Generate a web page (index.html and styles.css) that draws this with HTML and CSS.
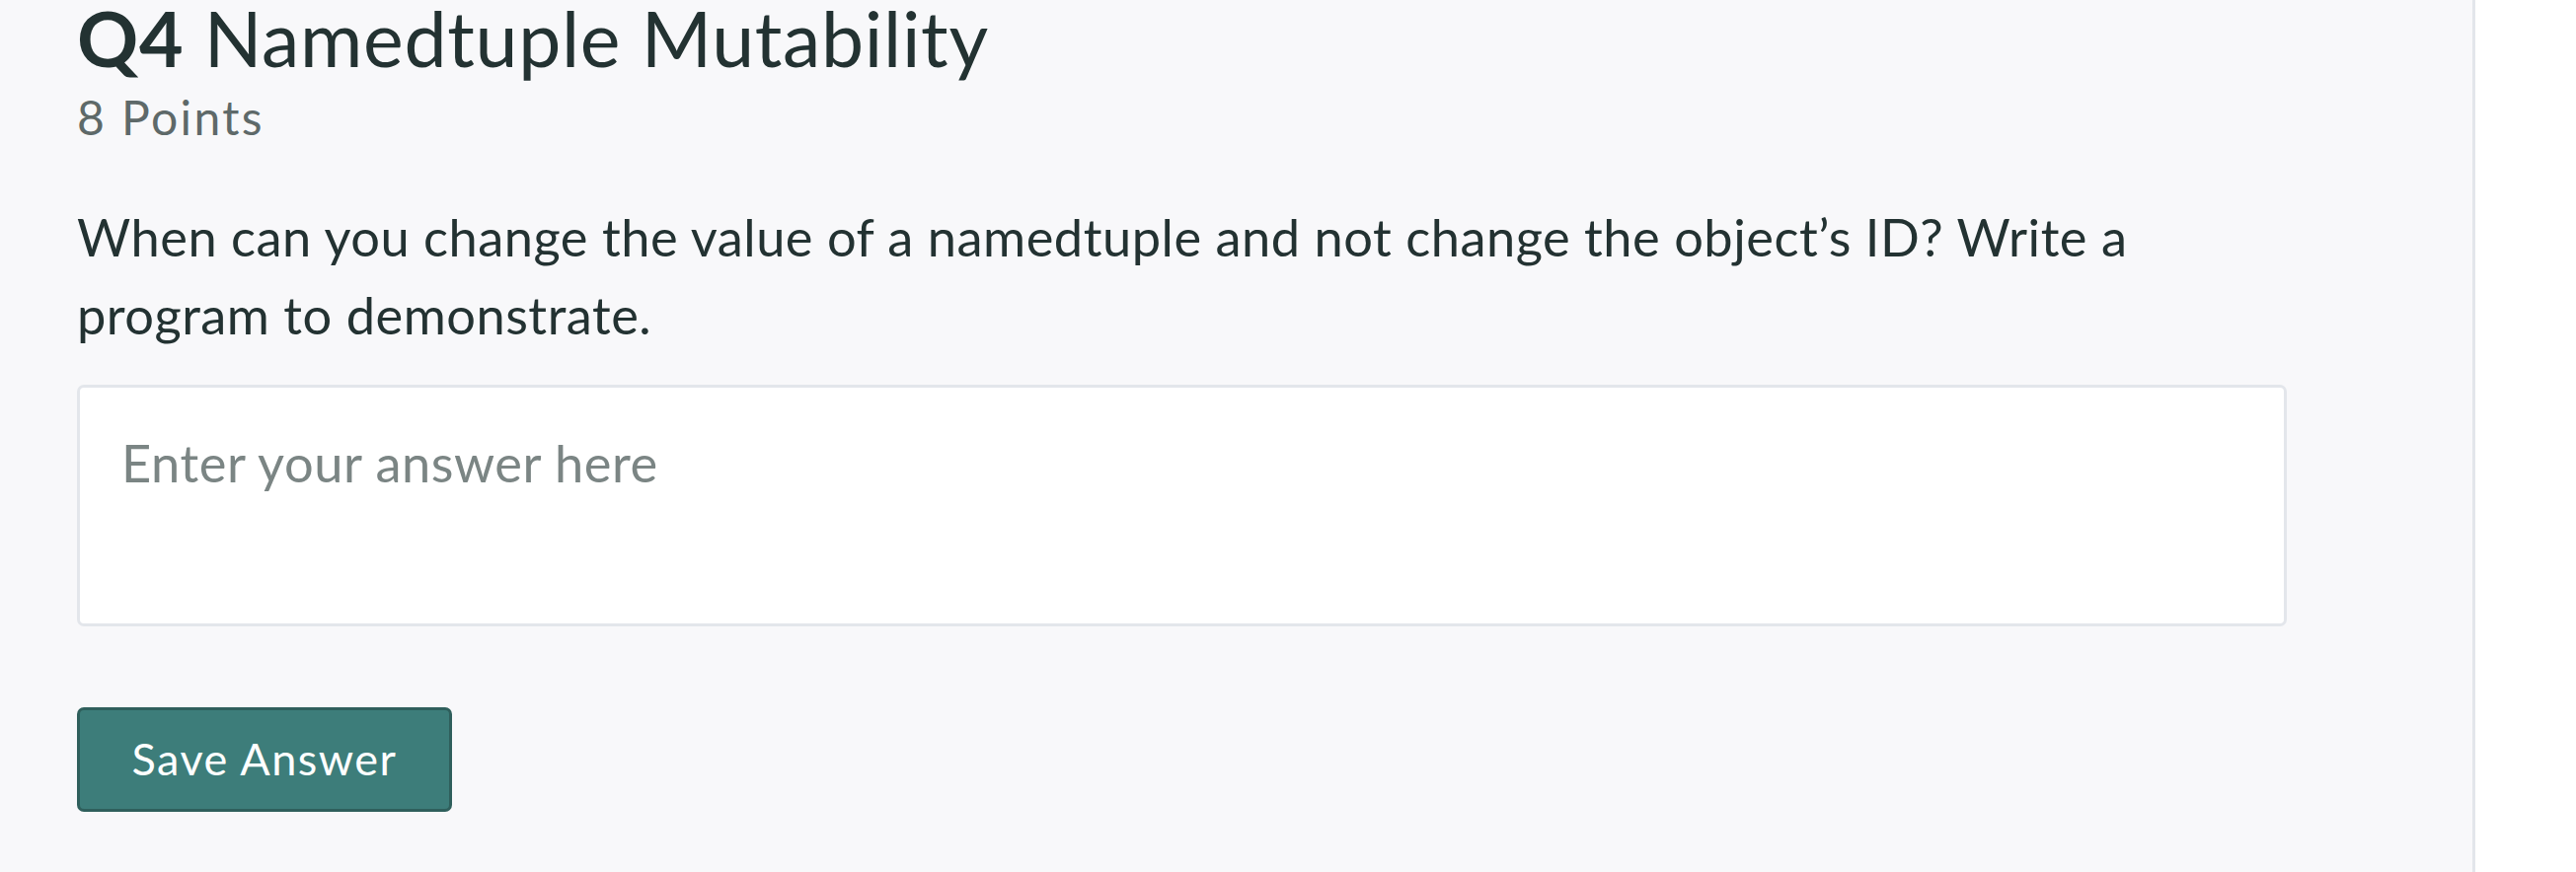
FILE: index.html
```html
<!DOCTYPE html>
<html lang="en">

<head>
    <meta charset="UTF-8">
    <meta name="viewport" content="width=device-width, initial-scale=1.0">
    <title>Q4 Namedtuple Mutability</title>
    <link rel="stylesheet" href="styles.css">
</head>

<body>
    <div class="page">
        <main class="question">
            <h1 class="question-title"><strong>Q4</strong> Namedtuple Mutability</h1>
            <div class="question-points">8 Points</div>
            <p class="question-body">When can you change the value of a namedtuple and not change the object’s ID? Write a program to demonstrate.</p>
            <textarea class="answer" placeholder="Enter your answer here"></textarea>
            <div class="actions">
                <button class="btn btn-save">Save Answer</button>
            </div>
        </main>
        <aside class="side"></aside>
    </div>
</body>

</html>
```

FILE: styles.css
```css
* {
    padding: 0;
    margin: 0;
    box-sizing: border-box;
}

html,
body {
    height: 100%;
}

body {
    font-family: Lato, "Open Sans", sans-serif;
    color: #233232;
    background: #fff;
    overflow: hidden;
}

.page {
    display: flex;
    height: 100%;
}

.question {
    width: 2508px;
    flex-shrink: 0;
    background: #f8f8fa;
    border-right: 3px solid #e3e6eb;
    padding: 0 0 0 78px;
}

.question-title {
    font-size: 77px;
    font-weight: 400;
    line-height: 1;
    letter-spacing: 0.7px;
}

.question-title strong {
    font-weight: 700;
}

.question-points {
    margin-top: 13px;
    font-size: 48px;
    line-height: 1.2;
    letter-spacing: 2.4px;
    color: #5e6969;
}

.question-body {
    margin-top: 52px;
    width: 2240px;
    font-size: 52.4px;
    line-height: 79px;
    letter-spacing: 0.5px;
}

.answer {
    display: block;
    margin-top: 32px;
    width: 2239px;
    height: 245px;
    padding: 36px 42px;
    border: 3px solid #e3e6eb;
    border-radius: 7px;
    background: #fff;
    font-family: inherit;
    font-size: 52.4px;
    line-height: 79px;
    letter-spacing: 0.55px;
    color: #233232;
    resize: none;
    outline: none;
}

.answer::placeholder {
    color: #7b8584;
}

.actions {
    margin-top: 82px;
}

.btn {
    font-family: inherit;
    cursor: pointer;
}

.btn-save {
    width: 380px;
    height: 106px;
    border: 3px solid #2f5f5c;
    border-radius: 7px;
    background: #3d7d7a;
    color: #fff;
    font-size: 45px;
    line-height: 1;
    letter-spacing: 1.5px;
}

.side {
    flex: 1;
}
```
